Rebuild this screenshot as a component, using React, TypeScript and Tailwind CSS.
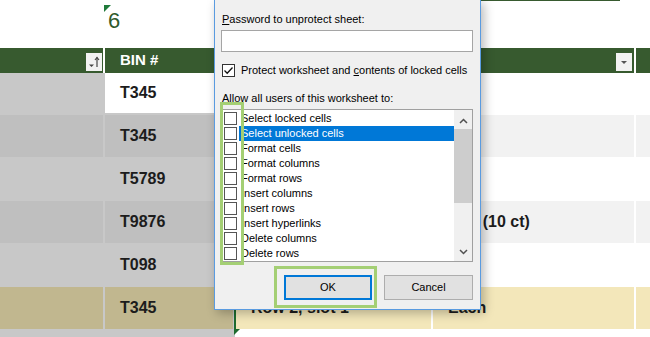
import React from 'react';

const ITEMS = [
    'Select locked cells',
    'Select unlocked cells',
    'Format cells',
    'Format columns',
    'Format rows',
    'Insert columns',
    'Insert rows',
    'Insert hyperlinks',
    'Delete columns',
    'Delete rows',
];

type Row = {
    h: string;
    a: string;
    b: string;
    bText: string;
    c: string;
    cText: string;
    d: string;
    dText: string;
    e: string;
    selected?: boolean;
};

// cells under the dialog are left blank
const ROWS: Row[] = [
    {h: 'h-[40px]', a: 'bg-[#c8c8c8]', b: 'bg-white', bText: 'T345', c: 'bg-white', cText: '', d: 'bg-white', dText: '', e: 'bg-white'},
    {h: 'h-[42px]', a: 'bg-[#bfbfbf]', b: 'bg-[#bfbfbf]', bText: 'T345', c: 'bg-[#f2f2f2]', cText: '', d: 'bg-[#f2f2f2]', dText: '', e: 'bg-[#f2f2f2]'},
    {h: 'h-[40px]', a: 'bg-[#c8c8c8]', b: 'bg-[#c8c8c8]', bText: 'T5789', c: 'bg-white', cText: '', d: 'bg-white', dText: '', e: 'bg-white'},
    {h: 'h-[42px]', a: 'bg-[#bfbfbf]', b: 'bg-[#bfbfbf]', bText: 'T9876', c: 'bg-[#f2f2f2]', cText: '', d: 'bg-[#f2f2f2]', dText: 'Box (10 ct)', e: 'bg-[#f2f2f2]'},
    {h: 'h-[40px]', a: 'bg-[#c8c8c8]', b: 'bg-[#c8c8c8]', bText: 'T098', c: 'bg-white', cText: '', d: 'bg-white', dText: '', e: 'bg-white'},
    {h: 'h-[42px]', a: 'bg-[#c1b78f]', b: 'bg-[#c1b78f]', bText: 'T345', c: 'bg-[#f3e7ba]', cText: 'Row 2, slot 1', d: 'bg-[#f3e7ba]', dText: 'Each', e: 'bg-[#f3e7ba]', selected: true},
];

function SortFilterIcon() {
    return (
        <svg width="16" height="18" viewBox="0 0 16 18">
            <polygon points="3,11.5 8,11.5 5.5,14" fill="#444" />
            <line x1="11" y1="4.5" x2="11" y2="14" stroke="#444" strokeWidth="1.2" />
            <path d="M9 7 L11 4.5 L13 7" fill="none" stroke="#444" strokeWidth="1.2" />
        </svg>
    );
}

function DropIcon() {
    return (
        <svg width="16" height="18" viewBox="0 0 16 18">
            <polygon points="5,8 11,8 8,11" fill="#555" />
        </svg>
    );
}

function Chevron({up}: {up?: boolean}) {
    return (
        <svg width="9" height="6" viewBox="0 0 9 6">
            <path d={up ? 'M1 5 L4.5 1.5 L8 5' : 'M1 1 L4.5 4.5 L8 1'} fill="none" stroke="#505050" strokeWidth="1.5" />
        </svg>
    );
}

function Box({checked}: {checked?: boolean}) {
    return (
        <div className={`w-[13px] h-[13px] bg-white border flex items-center justify-center flex-shrink-0 ${checked ? 'border-[#333333]' : 'border-[#555555]'}`}>
            {checked && (
                <svg width="11" height="11" viewBox="0 0 11 11">
                    <path d="M1.5 5.5 L4.2 8.2 L9.5 2.5" fill="none" stroke="#111" strokeWidth="1.3" />
                </svg>
            )}
        </div>
    );
}

function ProtectDialog() {
    return (
        <div className="absolute left-[214px] top-0 w-[267px] h-[310px] bg-[#f0f0f0] border-x border-b border-[#5a9be0] shadow-[3px_3px_10px_rgba(0,0,0,0.28)] pl-[6px] pr-[7px] flex flex-col text-[11px] text-black font-['Liberation_Sans',Arial,sans-serif]">
            <div className="mt-[12px] h-[14px] leading-[14px] pl-[1px]">
                <span className="underline">P</span>assword to unprotect sheet:
            </div>
            <div className="mt-[4px] h-[22px] bg-white border border-[#a5a5a5]" />
            <div className="mt-[11px] h-[14px] flex items-center gap-[6px] pl-[1px]">
                <Box checked />
                <span className="leading-[14px]">
                    Protect worksheet and <span className="underline">c</span>ontents of locked cells
                </span>
            </div>
            <div className="mt-[14px] h-[14px] leading-[14px] pl-[1px]">Allow all users of this worksheet to:</div>
            <div className="mt-[4px] h-[153px] bg-white border border-[#a0a0a0] flex">
                <div className="flex-1 pt-[1px] flex flex-col">
                    {ITEMS.map((item, i) => (
                        <div key={item} className="h-[15px] flex items-center pl-[2px]">
                            <Box />
                            <div className={`ml-[2px] flex-1 h-[15px] pl-[2px] leading-[15px] whitespace-nowrap ${i === 1 ? 'bg-[#0078d7] text-white' : ''}`}>
                                {item}
                            </div>
                        </div>
                    ))}
                </div>
                <div className="w-[18px] bg-[#f0f0f0] flex flex-col">
                    <div className="h-[19px] flex items-center justify-center pt-[2px]">
                        <Chevron up />
                    </div>
                    <div className="h-[74px] bg-[#cdcdcd]" />
                    <div className="flex-1" />
                    <div className="h-[19px] flex items-center justify-center">
                        <Chevron />
                    </div>
                </div>
            </div>
            <div className="mt-[13px] flex justify-end gap-[12px]">
                <button className="w-[88px] h-[25px] bg-[#e1e1e1] border-2 border-[#0078d7] text-[11px]">OK</button>
                <button className="w-[89px] h-[25px] bg-[#e1e1e1] border border-[#adadad] text-[11px]">Cancel</button>
            </div>
            {/* green callout boxes */}
            <div className="absolute left-[5px] top-[102px] w-[24px] h-[163px] border-[3px] border-[#a4cf74] pointer-events-none" />
            <div className="absolute left-[59px] top-[266px] w-[103px] h-[42px] border-[3px] border-[#a4cf74] pointer-events-none" />
        </div>
    );
}

export default function App() {
    return (
        <div className="relative w-[650px] h-[337px] overflow-hidden bg-white font-['Liberation_Sans',Arial,sans-serif]">
            {/* area above the table */}
            <div className="relative h-[48px] pl-[104px] pt-[5px]">
                <div className="absolute top-0 left-[300px] w-[320px] h-[1px] bg-[#375a2f]" />
                <div className="relative">
                    <svg className="absolute left-0 top-0" width="7" height="7" viewBox="0 0 7 7">
                        <polygon points="0,0 7,0 0,7" fill="#1f7a3a" />
                    </svg>
                    <div className="pt-[5px] pl-[4px] text-[22px] leading-none text-[#2f5a2c]">6</div>
                </div>
            </div>

            {/* header */}
            <div className="flex h-[25px] gap-[2px] bg-white">
                <div className="w-[103px] bg-[#375a2f] flex items-end justify-end pr-[1px] pb-[2px]">
                    <div className="w-[16px] h-[18px] bg-[#f2f2f2]">
                        <SortFilterIcon />
                    </div>
                </div>
                <div className="w-[128px] bg-[#375a2f] pl-[15px] flex items-center text-white text-[15px] font-bold">BIN #</div>
                <div className="w-[196px] bg-[#375a2f]" />
                <div className="w-[201px] bg-[#375a2f] flex items-end justify-end pr-[2px] pb-[2px]">
                    <div className="w-[16px] h-[18px] bg-[#f2f2f2]">
                        <DropIcon />
                    </div>
                </div>
                <div className="flex-1 bg-[#375a2f]" />
            </div>

            {/* data rows */}
            {ROWS.map((r, i) => (
                <div key={i} className="flex text-[16px] font-bold text-[#1c1c1c]">
                    <div className="w-[235px] bg-[#c8c8c8] flex gap-[2px] pr-[2px] pb-[2px]">
                        <div className={`w-[103px] ${r.h} ${r.a}`} />
                        <div className={`flex-1 ${r.h} ${r.b} pl-[15px] flex items-center`}>{r.bText}</div>
                    </div>
                    <div className="flex-1 flex gap-[2px] pb-[2px]">
                        <div className={`relative w-[196px] ${r.h} ${r.c} pl-[16px] flex items-center`}>
                            {r.cText}
                            {r.selected && (
                                <>
                                    <div className="absolute left-[-1px] top-0 bottom-0 w-[2px] bg-[#1e6b2e]" />
                                    <svg className="absolute left-[-1px] bottom-[-6px]" width="6" height="6" viewBox="0 0 6 6">
                                        <polygon points="0,0 6,0 0,6" fill="#1e6b2e" />
                                    </svg>
                                </>
                            )}
                        </div>
                        <div className={`w-[201px] ${r.h} ${r.d} pl-[15px] flex items-center whitespace-nowrap`}>{r.dText}</div>
                        <div className={`flex-1 ${r.h} ${r.e}`} />
                    </div>
                </div>
            ))}
            <div className="flex h-[10px]">
                <div className="w-[235px] bg-[#c8c8c8]" />
                <div className="flex-1 bg-white" />
            </div>

            <ProtectDialog />
        </div>
    );
}
